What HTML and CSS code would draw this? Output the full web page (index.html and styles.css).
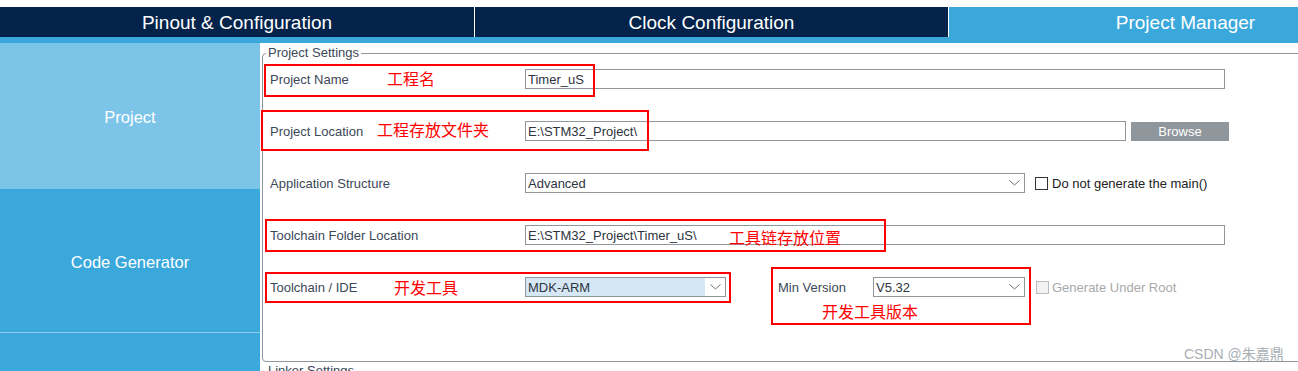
FILE: index.html
```
<!DOCTYPE html>
<html lang="en">
  <head>
    <meta charset="UTF-8" />
    <meta name="viewport" content="width=device-width, initial-scale=1.0" />
    <title>Project Manager</title>
    <link rel="stylesheet" href="styles.css">
  </head>
  <body>
    <div class="tabs">
      <div class="tab">Pinout &amp; Configuration</div>
      <div class="tab">Clock Configuration</div>
      <div class="tab active">Project Manager</div>
    </div>
    <div class="strip"></div>
    <div class="main">
      <div class="side">
        <div class="side-item active">Project</div>
        <div class="side-item gen">Code Generator</div>
        <div class="side-item"></div>
      </div>
      <div class="content">
        <fieldset class="group">
          <legend>Project Settings</legend>
          <div class="rows">
            <div class="row">
              <span class="label">Project Name</span>
              <div class="field wide">Timer_uS</div>
            </div>
            <div class="row">
              <span class="label">Project Location</span>
              <div class="field loc">E:\STM32_Project\</div>
              <button class="browse">Browse</button>
            </div>
            <div class="row">
              <span class="label">Application Structure</span>
              <div class="field select app">
                <span class="value">Advanced</span>
                <span class="arrow">
                  <svg width="11" height="6" viewBox="0 0 11 6"><polyline points="0.5,0.5 5.5,5 10.5,0.5" fill="none" stroke="#707070" stroke-width="1"/></svg>
                </span>
              </div>
              <span class="check"></span>
              <span class="check-text">Do not generate the main()</span>
            </div>
            <div class="row">
              <span class="label">Toolchain Folder Location</span>
              <div class="field wide">E:\STM32_Project\Timer_uS\</div>
            </div>
            <div class="row">
              <span class="label">Toolchain / IDE</span>
              <div class="field select ide">
                <span class="value picked">MDK-ARM</span>
                <span class="arrow">
                  <svg width="11" height="6" viewBox="0 0 11 6"><polyline points="0.5,0.5 5.5,5 10.5,0.5" fill="none" stroke="#707070" stroke-width="1"/></svg>
                </span>
              </div>
              <span class="min-label">Min Version</span>
              <div class="field select ver">
                <span class="value">V5.32</span>
                <span class="arrow">
                  <svg width="11" height="6" viewBox="0 0 11 6"><polyline points="0.5,0.5 5.5,5 10.5,0.5" fill="none" stroke="#707070" stroke-width="1"/></svg>
                </span>
              </div>
              <span class="check off"></span>
              <span class="check-text off">Generate Under Root</span>
            </div>
          </div>
        </fieldset>
        <fieldset class="group next">
          <legend>Linker Settings</legend>
        </fieldset>
      </div>
    </div>

    <!-- red annotations drawn over the dialog -->
    <div class="mark m1"></div>
    <div class="mark m2"></div>
    <div class="mark m3"></div>
    <div class="mark m4"></div>
    <div class="mark m5"></div>
    <span class="note n1">工程名</span>
    <span class="note n2">工程存放文件夹</span>
    <span class="note n3">工具链存放位置</span>
    <span class="note n4">开发工具</span>
    <span class="note n5">开发工具版本</span>
    <span class="watermark">CSDN @朱嘉鼎</span>
  </body>
</html>
```
FILE: styles.css
```
* {
  box-sizing: border-box;
}
body {
  margin: 0;
  width: 1298px;
  height: 371px;
  overflow: hidden;
  position: relative;
  background: #fff;
  font-family: "Liberation Sans", Arial, "Noto Sans CJK SC", sans-serif;
}
.tabs {
  display: flex;
  margin-top: 7px;
  width: 1422px;
}
.tab {
  width: 474px;
  height: 30px;
  flex: none;
  background: #03234b;
  color: #fff;
  font-size: 19px;
  display: flex;
  align-items: center;
  justify-content: center;
  padding-top: 1px;
}
.tab + .tab {
  border-left: 1px solid #fff;
}
.tab.active {
  background: #3ba8db;
}
.strip {
  height: 6px;
  background: #3ba8db;
}
.main {
  display: flex;
  height: 328px;
}
.side {
  width: 260px;
  flex: none;
  background: #3aa8db;
  display: flex;
  flex-direction: column;
}
.side-item {
  height: 146px;
  flex: none;
  color: #fff;
  font-size: 16.5px;
  display: flex;
  align-items: center;
  justify-content: center;
  padding-top: 2px;
}
.side-item.active {
  background: #7cc5e8;
}
.side-item.gen {
  height: 144px;
  padding-top: 3px;
  border-bottom: 1px solid #8ccdec;
}
.content {
  flex: 1;
  padding: 2px 0 0 2px;
}
.group {
  margin: 0;
  padding: 0 0 0 7px;
  width: 1100px;
  border: 1px solid #8f969c;
  border-radius: 4px;
}
.group legend {
  font-size: 13px;
  line-height: 16px;
  color: #3c4858;
  padding: 0 2px;
  margin-left: -4px;
}
.group.next {
  margin-top: 1px;
  height: 40px;
}
.rows {
  margin-top: -8px;
  padding-bottom: 48px;
}
.row {
  display: flex;
  align-items: center;
  height: 52px;
}
.label {
  width: 255px;
  flex: none;
  font-size: 13px;
  color: #3c4858;
}
.field {
  height: 20px;
  flex: none;
  border: 1px solid #8f969c;
  font-size: 13px;
  color: #2e3440;
  padding-left: 2px;
  display: flex;
  align-items: center;
  background: #fff;
}
.field.wide {
  width: 700px;
}
.field.loc {
  width: 601px;
}
.browse {
  margin-left: 5px;
  width: 98px;
  height: 19px;
  border: 0;
  padding: 0;
  background: #8f969c;
  color: #fff;
  font-family: "Liberation Sans", Arial, sans-serif;
  font-size: 13px;
}
.select {
  padding-left: 0;
}
.select .value {
  flex: 1;
  height: 100%;
  padding-left: 2px;
  display: flex;
  align-items: center;
}
.select .value.picked {
  background: #d5e6f5;
}
.select .arrow {
  width: 20px;
  height: 100%;
  display: flex;
  align-items: center;
  justify-content: center;
}
.field.app {
  width: 500px;
}
.field.ide {
  width: 201px;
}
.field.ver {
  width: 152px;
}
.min-label {
  margin-left: 52px;
  width: 95px;
  flex: none;
  font-size: 13px;
  color: #3c4858;
}
.check {
  width: 13px;
  height: 13px;
  margin-left: 10px;
  border: 1px solid #333;
  background: #fff;
  flex: none;
}
.check.off {
  margin-left: 11px;
  border-color: #bcbcbc;
  background: #f2f2f2;
}
.check-text {
  margin-left: 4px;
  font-size: 13px;
  color: #222;
  white-space: nowrap;
}
.check-text.off {
  margin-left: 3px;
  color: #a9a9a9;
}
.mark {
  position: absolute;
  border: 2px solid #f00;
}
.m1 { left: 264px; top: 64px; width: 331px; height: 33px; }
.m2 { left: 261px; top: 110px; width: 388px; height: 41px; }
.m3 { left: 265px; top: 219px; width: 621px; height: 33px; }
.m4 { left: 265px; top: 272px; width: 466px; height: 31px; }
.m5 { left: 771px; top: 267px; width: 260px; height: 58px; }
.note {
  position: absolute;
  color: #f00;
  font-size: 16px;
  line-height: 20px;
  font-family: "Noto Sans CJK SC", sans-serif;
  white-space: nowrap;
}
.n1 { left: 387px; top: 68px; }
.n2 { left: 377px; top: 119px; }
.n3 { left: 729px; top: 227px; }
.n4 { left: 394px; top: 277px; }
.n5 { left: 822px; top: 301px; }
.watermark {
  position: absolute;
  left: 1184px;
  top: 346px;
  font-size: 14px;
  line-height: 16px;
  color: #a8aeb4;
  font-family: "Liberation Sans", "Noto Sans CJK SC", sans-serif;
}
```
